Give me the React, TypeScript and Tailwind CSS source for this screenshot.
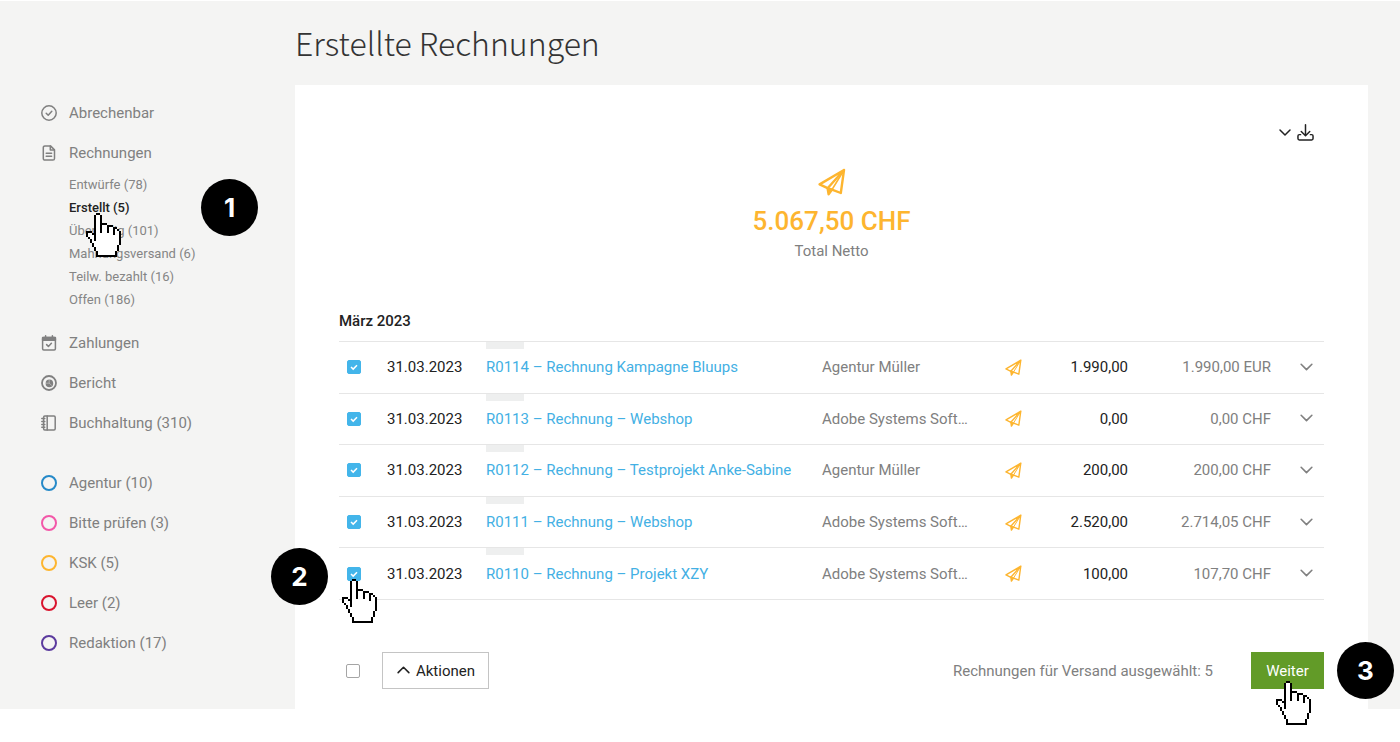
import type { ReactNode } from "react";

const HAND = [
  ".....XX..........",
  "....XooX.........",
  "....XooX.........",
  "....XooX.........",
  "....XooX.........",
  "....XooXXX.......",
  "....XooXooXXX....",
  "....XooXooXooXX..",
  "....XooXooXooXoX.",
  "XXX.XooXooXooXooX",
  "XooXXooooooooXooX",
  "XoooXoooooooooooX",
  ".XooXoooooooooooX",
  "..XoXoooooooooooX",
  "..XoooooooooooooX",
  "...XooooooooooooX",
  "...XoooooooooooX.",
  "....XooooooooooX.",
  "....XooooooooooX.",
  ".....XooooooooX..",
  ".....XooooooooX..",
  ".....XXXXXXXXXX..",
];

function cells(mark: string) {
  return HAND.flatMap((row, y) =>
    row.split("").map((c, x) => (c === mark ? `M${x} ${y}h1v1h-1z` : "")),
  ).join("");
}

function HandPointer({ className }: { className: string }) {
  return (
    <svg
      className={`pointer-events-none absolute z-20 h-[44px] w-[35px] ${className}`}
      viewBox="0 0 17 22"
      preserveAspectRatio="none"
      shapeRendering="crispEdges"
      aria-hidden="true"
    >
      <path d={cells("o")} fill="#fff" />
      <path d={cells("X")} fill="#000" />
    </svg>
  );
}

function Step({ n, className }: { n: number; className: string }) {
  return (
    <span
      className={`absolute z-10 flex size-[57px] items-center justify-center rounded-full bg-black font-['Inter',sans-serif] text-[26px] leading-none font-bold text-white ${className}`}
    >
      {n}
    </span>
  );
}

function Plane({ className, stroke }: { className: string; stroke: number }) {
  return (
    <svg className={className} viewBox="0 0 28 28" fill="none" stroke="#fdb52f" strokeWidth={stroke} strokeLinejoin="round" strokeLinecap="round" aria-hidden="true">
      <path d="M26 2 1.6 16.4l8 3.8L26 2zM26 2l-3.2 23-8.8-3.4" />
      <path d="m9.6 20.2 1 6.2 3.4-4.8z" fill="#fdb52f" />
      <path d="M26 2 14 21.6" strokeWidth={stroke * 0.7} />
    </svg>
  );
}

function Chevron({ className, up }: { className: string; up?: boolean }) {
  return (
    <svg className={className} viewBox="0 0 14 14" fill="none" stroke="currentColor" strokeWidth="1.5" strokeLinecap="round" strokeLinejoin="round" aria-hidden="true">
      <path d={up ? "M2 9 7 4l5 5" : "m2 4 5 5 5-5"} />
    </svg>
  );
}

function NavIcon({ children }: { children: ReactNode }) {
  return (
    <svg className="size-4 shrink-0" viewBox="0 0 16 16" fill="none" stroke="currentColor" strokeWidth="1.5" strokeLinecap="round" strokeLinejoin="round" aria-hidden="true">
      {children}
    </svg>
  );
}

const checkCircle = (
  <NavIcon>
    <circle cx="8" cy="8" r="7.2" />
    <path d="m5.2 8.2 2 2 3.6-4" />
  </NavIcon>
);
const fileText = (
  <NavIcon>
    <path d="M3.9.9h5.6l4 4v8.6a1.6 1.6 0 0 1-1.6 1.6H3.9a1.6 1.6 0 0 1-1.6-1.6V2.5A1.6 1.6 0 0 1 3.9.9z" />
    <path d="M9.3 1v4h4M5.2 8.2h5.4M5.2 11.2h5.4" />
  </NavIcon>
);
const calendar = (
  <NavIcon>
    <rect x="1.6" y="2.4" width="12.8" height="12.6" rx="1.2" />
    <path d="M1.6 2.6h12.8v2.6H1.6z" fill="currentColor" />
    <path d="M4.6.8v2M11.4.8v2M5.6 9.6l1.8 1.8 3-3.2" />
  </NavIcon>
);
const report = (
  <NavIcon>
    <circle cx="8" cy="8" r="7" strokeWidth="1.8" />
    <circle cx="8.4" cy="8.4" r="3.8" fill="currentColor" stroke="none" />
    <path d="M4.6 8.2h3.6V5M8.4 8.4l2 1.8" stroke="#f4f4f3" strokeWidth="0.4" />
  </NavIcon>
);
const notebook = (
  <NavIcon>
    <rect x="2.6" y="1" width="11.6" height="14" rx="1.2" />
    <path d="M6.2 1v14M.8 3.6h3M.8 6.4h3M.8 9.4h3M.8 12.3h3" />
  </NavIcon>
);

function NavLink({ icon, children }: { icon: ReactNode; children: ReactNode }) {
  return (
    <a href="#" className="flex h-10 items-center gap-3 text-[#808080]">
      {icon}
      <span>{children}</span>
    </a>
  );
}

const subItems = [
  "Entwürfe (78)",
  "Erstellt (5)",
  "Überfällig (101)",
  "Mahnungsversand (6)",
  "Teilw. bezahlt (16)",
  "Offen (186)",
];

const tags = [
  { label: "Agentur (10)", ring: "border-[#2589c8]" },
  { label: "Bitte prüfen (3)", ring: "border-[#f257a8]" },
  { label: "KSK (5)", ring: "border-[#fdb52f]" },
  { label: "Leer (2)", ring: "border-[#d9142e]" },
  { label: "Redaktion (17)", ring: "border-[#5b3a9e]" },
];

const rows = [
  { title: "R0114 – Rechnung Kampagne Bluups", client: "Agentur Müller", net: "1.990,00", total: "1.990,00 EUR" },
  { title: "R0113 – Rechnung – Webshop", client: "Adobe Systems Soft…", net: "0,00", total: "0,00 CHF" },
  { title: "R0112 – Rechnung – Testprojekt Anke-Sabine", client: "Agentur Müller", net: "200,00", total: "200,00 CHF" },
  { title: "R0111 – Rechnung – Webshop", client: "Adobe Systems Soft…", net: "2.520,00", total: "2.714,05 CHF" },
  { title: "R0110 – Rechnung – Projekt XZY", client: "Adobe Systems Soft…", net: "100,00", total: "107,70 CHF" },
];

function Sidebar() {
  return (
    <nav className="w-[295px] shrink-0 pt-[92px] pl-[41px]">
      <NavLink icon={checkCircle}>Abrechenbar</NavLink>
      <NavLink icon={fileText}>Rechnungen</NavLink>
      <ul className="pl-7 text-[13px] leading-[23px] text-[#858585]">
        {subItems.map((label, i) => (
          <li key={label} className="relative">
            <a href="#" className={i === 1 ? "font-medium text-[#222]" : ""}>
              {label}
            </a>
            {i === 1 && (
              <>
                <HandPointer className="top-[17px] left-[17px]" />
                <Step n={1} className="-top-[17px] left-[132px]" />
              </>
            )}
          </li>
        ))}
      </ul>
      <div className="pt-3">
        <NavLink icon={calendar}>Zahlungen</NavLink>
        <NavLink icon={report}>Bericht</NavLink>
        <NavLink icon={notebook}>Buchhaltung (310)</NavLink>
      </div>
      <div className="pt-5">
        {tags.map((t) => (
          <NavLink key={t.label} icon={<span className={`size-4 rounded-full border-2 ${t.ring}`} />}>
            {t.label}
          </NavLink>
        ))}
      </div>
    </nav>
  );
}

function CheckBox({ label, checked }: { label: string; checked?: boolean }) {
  return (
    <span className="relative block size-[14px]">
      <input
        type="checkbox"
        aria-label={label}
        defaultChecked={checked}
        className="peer block size-[14px] appearance-none rounded-[2px] border border-[#a5a5a5] bg-white checked:border-[#43b5ea] checked:bg-[#43b5ea]"
      />
      <svg className="pointer-events-none absolute inset-0 hidden size-[14px] peer-checked:block" viewBox="0 0 14 14" fill="none" stroke="#fff" strokeWidth="1.5" aria-hidden="true">
        <path d="m4 7 2.2 2.1L10 5.2" />
      </svg>
    </span>
  );
}

function InvoiceTable() {
  return (
    <table className="h-[259px] w-full table-fixed border-collapse text-left">
      <colgroup>
        <col className="w-[48px]" />
        <col className="w-[99px]" />
        <col />
        <col className="w-[170px]" />
        <col className="w-[48px]" />
        <col className="w-[88px]" />
        <col className="w-[143px]" />
        <col className="w-[53px]" />
      </colgroup>
      <tbody>
        {rows.map((r, i) => (
          <tr key={r.title} className="border-y border-[#e6e6e6]">
            <td className="relative pl-2">
              <CheckBox label={r.title} checked />
              {i === rows.length - 1 && (
                <>
                  <Step n={2} className="top-0 -left-[68px]" />
                  <HandPointer className="top-[31px] left-[3px]" />
                </>
              )}
            </td>
            <td className="text-[#222]">31.03.2023</td>
            <td className="relative">
              <span className="absolute top-0 left-0 h-[7px] w-[38px] bg-[#eeefef]" />
              <a href="#" className="whitespace-nowrap text-[#43b0e4]">
                {r.title}
              </a>
            </td>
            <td className="whitespace-nowrap text-[#808080]">{r.client}</td>
            <td className="pl-[13px]">
              <Plane className="size-[17px]" stroke={2.3} />
            </td>
            <td className="text-right text-[#222]">{r.net}</td>
            <td className="text-right text-[#808080]">{r.total}</td>
            <td className="text-[#808080]">
              <button type="button" aria-label="Details" className="ml-7 block">
                <Chevron className="size-[15px]" />
              </button>
            </td>
          </tr>
        ))}
      </tbody>
    </table>
  );
}

export default function App() {
  return (
    <div className="min-h-screen bg-white pt-px font-['Roboto',sans-serif] text-[15px] leading-6">
      <div className="flex bg-[#f4f4f3]">
        <Sidebar />
        <main className="min-w-0 flex-1 pr-8">
          <h1 className="h-[84px] pt-[18px] font-['Noto_Sans_CJK_SC',sans-serif] text-[32px] leading-[46px] font-light text-[#333]">
            Erstellte Rechnungen
          </h1>
          <section className="bg-white pr-11 pb-5 pl-11">
            <div className="flex justify-end gap-[5px] pt-[39px] pr-[10px] text-[#222]">
              <button type="button" aria-label="Optionen">
                <Chevron className="size-[14px]" />
              </button>
              <button type="button" aria-label="Herunterladen">
                <svg className="size-[17px]" viewBox="0 0 16 16" fill="none" stroke="currentColor" strokeWidth="1.4" strokeLinecap="round" strokeLinejoin="round" aria-hidden="true">
                  <path d="M8 .8v10M4 7l4 4 4-4M3.4 10H2.2a1.3 1.3 0 0 0-1.3 1.3v2.4A1.3 1.3 0 0 0 2.2 15h11.6a1.3 1.3 0 0 0 1.3-1.3v-2.4a1.3 1.3 0 0 0-1.3-1.3h-1.2" />
                </svg>
              </button>
            </div>
            <div className="flex flex-col items-center pt-[27px]">
              <Plane className="size-7" stroke={2.4} />
              <p className="pt-[9px] text-[26px] leading-8 font-medium text-[#fdb52f]">5.067,50 CHF</p>
              <p className="pt-0.5 text-[#808080]">Total Netto</p>
            </div>
            <h2 className="pt-[46px] pb-2 font-medium text-[#222]">März 2023</h2>
            <InvoiceTable />
            <div className="flex items-center pt-[52px]">
              <span className="pr-[22px] pl-[7px]">
                <CheckBox label="Alle auswählen" />
              </span>
              <button type="button" className="flex h-[37px] w-[107px] items-center justify-center gap-[5px] border border-[#c4c4c4] text-[#222]">
                <Chevron up className="size-[15px]" />
                Aktionen
              </button>
              <p className="ml-auto pr-[38px] text-[#808080]">Rechnungen für Versand ausgewählt: 5</p>
              <div className="relative">
                <button type="button" className="h-[37px] w-[73px] bg-[#629b28] text-white">
                  Weiter
                </button>
                <HandPointer className="top-[29px] left-[25px]" />
                <Step n={3} className="-top-[10px] left-[86px]" />
              </div>
            </div>
          </section>
        </main>
      </div>
    </div>
  );
}
